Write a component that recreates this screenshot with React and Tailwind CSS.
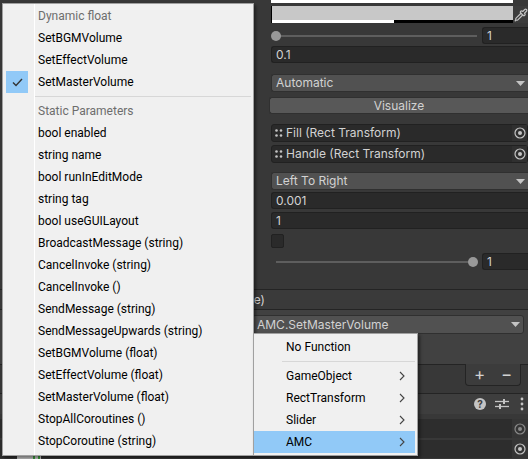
import { Pipette } from "lucide-react";

const menuFont = "font-['Roboto','Noto_Sans',sans-serif]";

const dynamicItems = ["SetBGMVolume", "SetEffectVolume", "SetMasterVolume"];
const staticItems = [
  "bool enabled",
  "string name",
  "bool runInEditMode",
  "string tag",
  "bool useGUILayout",
  "BroadcastMessage (string)",
  "CancelInvoke (string)",
  "CancelInvoke ()",
  "SendMessage (string)",
  "SendMessageUpwards (string)",
  "SetBGMVolume (float)",
  "SetEffectVolume (float)",
  "SetMasterVolume (float)",
  "StopAllCoroutines ()",
  "StopCoroutine (string)",
];
const subItems = ["GameObject", "RectTransform", "Slider", "AMC"];

function Arrow() {
  return (
    <svg width="6" height="10" viewBox="0 0 6 10" className="shrink-0">
      <polyline points="1,1 5,5 1,9" fill="none" stroke="#444" strokeWidth="1.1" />
    </svg>
  );
}

function DownTri() {
  return (
    <svg width="9" height="5" viewBox="0 0 9 5" className="shrink-0">
      <polygon points="0,0 9,0 4.5,5" fill="#c4c4c4" />
    </svg>
  );
}

function Target({ dim }) {
  return (
    <svg width="12" height="12" viewBox="0 0 12 12">
      <circle cx="6" cy="6" r="5" fill="none" stroke={dim ? "#8a8a8a" : "#c4c4c4"} strokeWidth="1.2" />
      <circle cx="6" cy="6" r="2" fill={dim ? "#8a8a8a" : "#c4c4c4"} />
    </svg>
  );
}

function Dots() {
  return (
    <svg width="8" height="8" viewBox="0 0 8 8" className="shrink-0">
      <circle cx="1.5" cy="1.5" r="1.3" fill="#c4c4c4" />
      <circle cx="6" cy="1.5" r="1.3" fill="#c4c4c4" />
      <circle cx="1.5" cy="6.5" r="1.3" fill="#c4c4c4" />
      <circle cx="6" cy="6.5" r="1.3" fill="#c4c4c4" />
    </svg>
  );
}

function Field({ children, className = "" }) {
  return (
    <div className={`h-[17px] flex items-center px-[4px] bg-[#2a2a2a] border border-[#212121] rounded-[3px] ${className}`}>
      {children}
    </div>
  );
}

function Dropdown({ label, className = "" }) {
  return (
    <div className={`h-[18px] flex items-center justify-between pl-[4px] pr-[3px] bg-[#515151] border border-[#303030] rounded-[3px] ${className}`}>
      <span>{label}</span>
      <DownTri />
    </div>
  );
}

function ObjectField({ label }) {
  return (
    <div className="h-[18px] flex items-center bg-[#2a2a2a] border border-[#212121] rounded-[3px]">
      <div className="flex-1 flex items-center gap-[3px] pl-[3px]">
        <Dots />
        <span>{label}</span>
      </div>
      <div className="w-[15px] h-full flex items-center justify-center bg-[#303030]">
        <Target />
      </div>
    </div>
  );
}

function Slider({ value }) {
  return (
    <div className="flex items-center h-[17px]">
      <div className="relative w-[207px] h-full flex items-center">
        <div className="ml-[5px] w-[201px] h-[2px] bg-[#5e5e5e]" />
        <div
          className="absolute top-1/2 -translate-y-1/2 w-[10px] h-[10px] rounded-full bg-[#999999]"
          style={{ left: `${value * 197}px` }}
        />
      </div>
      <Field className="ml-[4px] flex-1 rounded-r-none border-r-0">1</Field>
    </div>
  );
}

function Inspector() {
  return (
    <div className="flex flex-col font-['Inter',sans-serif] text-[12px] text-[#d2d2d2] leading-none">
      <div className="pl-[271px] flex flex-col">
        <div className="w-[242px] h-[3px] bg-white" />
        <div className="mt-[3px] flex h-[17px]">
          <div className="w-[242px] flex flex-col border-l border-black">
            <div className="h-[14px] bg-[#c8c8c8]" />
            <div className="h-[3px] flex">
              <div className="w-[122px] bg-white" />
              <div className="flex-1 bg-black" />
            </div>
          </div>
          <div className="flex-1 flex items-center justify-center bg-[#3c3c3c]">
            <Pipette size={14} color="#c4c4c4" strokeWidth={2} />
          </div>
        </div>
        <div className="mt-[4px]">
          <Slider value={0} />
        </div>
        <Field className="mt-[2px] rounded-r-none border-r-0">0.1</Field>
        <Dropdown label="Automatic" className="mt-[11px] rounded-r-none border-r-0" />
      </div>
      <div className="pl-[269px] mt-[5px]">
        <div className="h-[17px] flex items-center justify-center bg-[#585858] border border-[#303030] rounded-l-[3px] border-r-0">
          Visualize
        </div>
      </div>
      <div className="pl-[271px] flex flex-col">
        <div className="mt-[10px]">
          <ObjectField label="Fill (Rect Transform)" />
        </div>
        <div className="mt-[3px]">
          <ObjectField label="Handle (Rect Transform)" />
        </div>
        <Dropdown label="Left To Right" className="mt-[9px] rounded-r-none border-r-0" />
        <Field className="mt-[2px] rounded-r-none border-r-0">0.001</Field>
        <Field className="mt-[3px] rounded-r-none border-r-0">1</Field>
        <div className="mt-[5px] w-[13px] h-[14px] bg-[#2a2a2a] border border-[#212121] rounded-[2px]" />
        <div className="mt-[5px]">
          <Slider value={1} />
        </div>
      </div>

      {/* On Value Changed event */}
      <div className="mt-[19px] border-t border-[#242424] h-[20px] flex items-center bg-[#3a3a3a]">
        <div className="w-[265px] text-right whitespace-nowrap">On Value Changed (Single)</div>
      </div>
      <div className="h-[55px] border-t border-[#242424] bg-[#414141] pt-[5px] flex">
        <div className="w-[252px]" />
        <Dropdown label="AMC.SetMasterVolume" className="w-[272px] h-[19px]" />
      </div>
      <div className="flex border-t border-[#242424] h-[29px]">
        <div className="flex-1" />
        <div className="-mt-[1px] w-[56px] h-[22px] flex items-center justify-around bg-[#3c3c3c] border border-[#242424] border-t-0 rounded-b-[4px] text-[17px] text-[#d2d2d2]">
          <span>+</span>
          <span>−</span>
        </div>
        <div className="w-[7px]" />
      </div>
      <div className="h-[21px] border-t border-[#242424] bg-[#3e3e3e] flex items-center justify-end gap-[9px] pr-[4px]">
        <div className="w-[12px] h-[12px] rounded-full bg-[#c4c4c4] text-[#3e3e3e] text-[10px] font-bold flex items-center justify-center">
          ?
        </div>
        <svg width="14" height="12" viewBox="0 0 14 12">
          <line x1="0" y1="3.5" x2="14" y2="3.5" stroke="#c4c4c4" strokeWidth="1.3" />
          <line x1="9" y1="1" x2="9" y2="6" stroke="#c4c4c4" strokeWidth="2" />
          <line x1="0" y1="8.5" x2="14" y2="8.5" stroke="#c4c4c4" strokeWidth="1.3" />
          <line x1="5" y1="6" x2="5" y2="11" stroke="#c4c4c4" strokeWidth="2" />
        </svg>
        <svg width="4" height="14" viewBox="0 0 4 14" className="ml-[2px]">
          <circle cx="2" cy="2" r="1.4" fill="#c4c4c4" />
          <circle cx="2" cy="7" r="1.4" fill="#c4c4c4" />
          <circle cx="2" cy="12" r="1.4" fill="#c4c4c4" />
        </svg>
      </div>
      <div className="mt-[5px] flex h-[19px]">
        <div className="flex-1 bg-[#2d2d2d]" />
        <div className="w-[16px] flex items-center justify-center bg-[#353535]">
          <Target dim />
        </div>
      </div>
      <div className="mt-[2px] flex h-[18px]">
        <div className="flex-1 bg-[#2d2d2d]" />
        <div className="w-[16px] flex items-center justify-center bg-[#353535]">
          <Target />
        </div>
      </div>
    </div>
  );
}

function MainMenu() {
  return (
    <div className={`absolute left-[2px] top-[3px] w-[252px] h-[453px] bg-[#f0f0f0] border border-[#a0a0a0] shadow-[2px_2px_3px_rgba(0,0,0,0.45)] ${menuFont} text-[12px] text-black flex flex-col pt-[1px]`}>
      <div className="absolute left-[31px] top-0 bottom-0 w-px bg-white" />
      <div className="h-[22px] flex items-center pl-[35px] text-[#6d6d6d]">Dynamic float</div>
      {dynamicItems.map((item) => (
        <div key={item} className="h-[22px] flex items-center relative">
          {item === "SetMasterVolume" && (
            <div className="absolute left-[3px] top-0 w-[22px] h-[22px] bg-[#91c9f7] flex items-center justify-center">
              <svg width="11" height="9" viewBox="0 0 11 9">
                <polyline points="1,4.5 4,7.5 10,1" fill="none" stroke="#333" strokeWidth="1.4" />
              </svg>
            </div>
          )}
          <span className="pl-[35px]">{item}</span>
        </div>
      ))}
      <div className="h-[7px] flex items-center pl-[31px] pr-[2px]">
        <div className="w-full h-px bg-[#d7d7d7]" />
      </div>
      <div className="h-[22px] flex items-center pl-[35px] text-[#6d6d6d]">Static Parameters</div>
      {staticItems.map((item) => (
        <div key={item} className="h-[22px] flex items-center pl-[35px]">
          {item}
        </div>
      ))}
    </div>
  );
}

function SubMenu() {
  return (
    <div className={`absolute left-[253px] top-[333px] w-[165px] h-[123px] bg-[#f0f0f0] border border-[#a0a0a0] shadow-[2px_2px_3px_rgba(0,0,0,0.45)] ${menuFont} text-[12px] text-black flex flex-col pt-[2px]`}>
      <div className="h-[22px] flex items-center pl-[32px]">No Function</div>
      <div className="h-[7px] flex items-center pl-[28px] pr-[2px]">
        <div className="w-full h-px bg-[#d7d7d7]" />
      </div>
      {subItems.map((item) => (
        <div
          key={item}
          className={`h-[22px] mr-[2px] flex items-center justify-between pl-[32px] pr-[10px] ${item === "AMC" ? "bg-[#91c9f7]" : ""}`}
        >
          <span>{item}</span>
          <Arrow />
        </div>
      ))}
    </div>
  );
}

export default function App() {
  return (
    <div className="relative w-[528px] h-[459px] overflow-hidden bg-[#383838]">
      <Inspector />
      <div className="absolute left-[17px] top-[455px] w-[24px] h-[4px] bg-[#c0c0c0] flex justify-end gap-[3px] pr-[1px]">
        <div className="w-[2px] bg-[#3a9a3a]" />
        <div className="w-[2px] bg-[#3a9a3a]" />
      </div>
      <MainMenu />
      <SubMenu />
    </div>
  );
}
